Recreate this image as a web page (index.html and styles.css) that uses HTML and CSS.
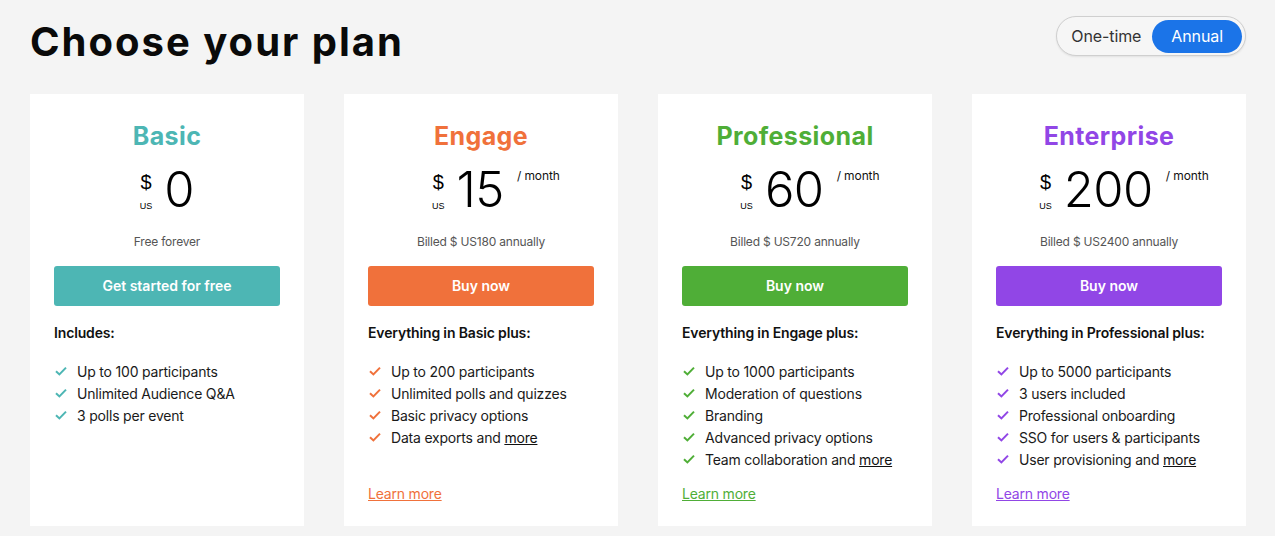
FILE: index.html
```html
<!DOCTYPE html>
<html lang="en">
<head>
<meta charset="utf-8">
<title>Choose your plan</title>
<link rel="stylesheet" href="styles.css">
</head>
<body>
<div class="page">
  <header class="header">
    <h1 class="headline">Choose your plan</h1>
    <div class="toggle">
      <span class="toggle-opt">One-time</span>
      <span class="toggle-opt active">Annual</span>
    </div>
  </header>

  <main class="cards">
    <section class="card basic">
      <h2 class="plan-name">Basic</h2>
      <div class="price">
        <div class="cur"><span class="dollar">$</span><span class="us">US</span></div>
        <span class="amount">0</span>
      </div>
      <p class="billed">Free forever</p>
      <a class="btn" href="#">Get started for free</a>
      <h3 class="inc">Includes:</h3>
      <ul class="features">
        <li><svg class="chk" viewBox="0 0 12 10"><path d="M1 5.2 L4.4 8.4 L11 1.6"/></svg>Up to 100 participants</li>
        <li><svg class="chk" viewBox="0 0 12 10"><path d="M1 5.2 L4.4 8.4 L11 1.6"/></svg>Unlimited Audience Q&amp;A</li>
        <li><svg class="chk" viewBox="0 0 12 10"><path d="M1 5.2 L4.4 8.4 L11 1.6"/></svg>3 polls per event</li>
      </ul>
    </section>

    <section class="card engage">
      <h2 class="plan-name">Engage</h2>
      <div class="price">
        <div class="cur"><span class="dollar">$</span><span class="us">US</span></div>
        <span class="amount">15</span>
        <span class="per">/ month</span>
      </div>
      <p class="billed">Billed $ US180 annually</p>
      <a class="btn" href="#">Buy now</a>
      <h3 class="inc">Everything in Basic plus:</h3>
      <ul class="features">
        <li><svg class="chk" viewBox="0 0 12 10"><path d="M1 5.2 L4.4 8.4 L11 1.6"/></svg>Up to 200 participants</li>
        <li><svg class="chk" viewBox="0 0 12 10"><path d="M1 5.2 L4.4 8.4 L11 1.6"/></svg>Unlimited polls and quizzes</li>
        <li><svg class="chk" viewBox="0 0 12 10"><path d="M1 5.2 L4.4 8.4 L11 1.6"/></svg>Basic privacy options</li>
        <li><svg class="chk" viewBox="0 0 12 10"><path d="M1 5.2 L4.4 8.4 L11 1.6"/></svg>Data exports and&nbsp;<a class="more" href="#">more</a></li>
      </ul>
      <a class="learn" href="#">Learn more</a>
    </section>

    <section class="card pro">
      <h2 class="plan-name">Professional</h2>
      <div class="price">
        <div class="cur"><span class="dollar">$</span><span class="us">US</span></div>
        <span class="amount">60</span>
        <span class="per">/ month</span>
      </div>
      <p class="billed">Billed $ US720 annually</p>
      <a class="btn" href="#">Buy now</a>
      <h3 class="inc">Everything in Engage plus:</h3>
      <ul class="features">
        <li><svg class="chk" viewBox="0 0 12 10"><path d="M1 5.2 L4.4 8.4 L11 1.6"/></svg>Up to 1000 participants</li>
        <li><svg class="chk" viewBox="0 0 12 10"><path d="M1 5.2 L4.4 8.4 L11 1.6"/></svg>Moderation of questions</li>
        <li><svg class="chk" viewBox="0 0 12 10"><path d="M1 5.2 L4.4 8.4 L11 1.6"/></svg>Branding</li>
        <li><svg class="chk" viewBox="0 0 12 10"><path d="M1 5.2 L4.4 8.4 L11 1.6"/></svg>Advanced privacy options</li>
        <li><svg class="chk" viewBox="0 0 12 10"><path d="M1 5.2 L4.4 8.4 L11 1.6"/></svg>Team collaboration and&nbsp;<a class="more" href="#">more</a></li>
      </ul>
      <a class="learn" href="#">Learn more</a>
    </section>

    <section class="card ent">
      <h2 class="plan-name">Enterprise</h2>
      <div class="price">
        <div class="cur"><span class="dollar">$</span><span class="us">US</span></div>
        <span class="amount">200</span>
        <span class="per">/ month</span>
      </div>
      <p class="billed">Billed $ US2400 annually</p>
      <a class="btn" href="#">Buy now</a>
      <h3 class="inc">Everything in Professional plus:</h3>
      <ul class="features">
        <li><svg class="chk" viewBox="0 0 12 10"><path d="M1 5.2 L4.4 8.4 L11 1.6"/></svg>Up to 5000 participants</li>
        <li><svg class="chk" viewBox="0 0 12 10"><path d="M1 5.2 L4.4 8.4 L11 1.6"/></svg>3 users included</li>
        <li><svg class="chk" viewBox="0 0 12 10"><path d="M1 5.2 L4.4 8.4 L11 1.6"/></svg>Professional onboarding</li>
        <li><svg class="chk" viewBox="0 0 12 10"><path d="M1 5.2 L4.4 8.4 L11 1.6"/></svg>SSO for users &amp; participants</li>
        <li><svg class="chk" viewBox="0 0 12 10"><path d="M1 5.2 L4.4 8.4 L11 1.6"/></svg>User provisioning and&nbsp;<a class="more" href="#">more</a></li>
      </ul>
      <a class="learn" href="#">Learn more</a>
    </section>
  </main>
</div>
</body>
</html>
```

FILE: styles.css
```css
* { box-sizing: border-box; }
html, body { margin: 0; padding: 0; }
body {
  background: #f4f4f4;
  font-family: Inter, "Liberation Sans", Arial, sans-serif;
  color: #111;
}
.page { padding: 16px 29px 0 30px; }

.header {
  display: flex;
  justify-content: space-between;
  align-items: flex-start;
  height: 78px;
}
.headline {
  margin: 0;
  font-family: Inter, "Liberation Sans", sans-serif;
  font-weight: 700;
  font-size: 40px;
  line-height: 52px;
  letter-spacing: 2px;
  color: #0a0a0a;
}

.toggle {
  display: flex;
  align-items: center;
  height: 40px;
  padding: 0 3px 0 14px;
  border: 1px solid #cfcfcf;
  border-radius: 20px;
  background: #f6f6f6;
  box-shadow: 0 1px 2px rgba(0,0,0,0.08);
}
.toggle-opt {
  font-size: 16px;
  color: #333;
  line-height: 33px;
  letter-spacing: -0.1px;
}
.toggle-opt.active {
  margin-left: 11px;
  padding: 0 19px;
  height: 33px;
  border-radius: 17px;
  background: #1b74e8;
  color: #fff;
}

.cards {
  display: grid;
  grid-template-columns: repeat(4, 274px);
  column-gap: 40px;
}
.card {
  background: #fff;
  display: flex;
  flex-direction: column;
  padding: 27px 24px 24px;
}
.plan-name {
  margin: 0;
  text-align: center;
  font-family: Inter, sans-serif;
  font-weight: 700;
  font-size: 25px;
  line-height: 30px;
  letter-spacing: 0.4px;
}
.basic { --c: #4db6b4; }
.engage { --c: #f0713b; }
.pro { --c: #4fae37; }
.ent { --c: #9146e6; }
.plan-name { color: var(--c); }

.price {
  margin-top: 14px;
  display: flex;
  justify-content: center;
  align-items: flex-start;
  height: 51px;
  color: #000;
}
.cur {
  display: flex;
  flex-direction: column;
  align-items: center;
  padding-top: 6px;
  font-family: "Liberation Sans", Arial, sans-serif;
}
.dollar { font-size: 20px; line-height: 22px; }
.us { font-size: 9px; line-height: 12px; margin-top: 7px; }
.amount {
  font-family: Inter, sans-serif;
  font-weight: 300;
  font-size: 49px;
  line-height: 50px;
  margin-left: 12px;
  letter-spacing: -0.5px;
}
.per {
  flex: 0 0 13px;
  width: 13px;
  margin-left: 13px;
  white-space: nowrap;
  font-family: Inter, sans-serif;
  font-size: 12px;
  line-height: 14px;
  margin-top: 4px;
  color: #111;
  letter-spacing: -0.1px;
}

.billed {
  margin: 18px 0 0;
  text-align: center;
  font-size: 12px;
  line-height: 16px;
  color: #555;
  letter-spacing: -0.2px;
}
.btn {
  display: block;
  margin-top: 16px;
  height: 40px;
  line-height: 40px;
  border-radius: 3px;
  background: var(--c);
  color: #fff;
  text-align: center;
  font-size: 14px;
  font-weight: 600;
  text-decoration: none;
}
.inc {
  margin: 17px 0 0;
  font-size: 14px;
  line-height: 20px;
  font-weight: 600;
  color: #111;
  letter-spacing: -0.15px;
}
.features {
  list-style: none;
  margin: 17px 0 0;
  padding: 0;
}
.features li {
  display: flex;
  align-items: center;
  height: 22px;
  font-size: 14px;
  color: #1a1a1a;
  letter-spacing: -0.2px;
}
.chk {
  width: 12px;
  height: 10px;
  margin: 0 10px 0 1px;
  flex: 0 0 12px;
}
.chk path {
  fill: none;
  stroke: var(--c);
  stroke-width: 2;
  stroke-linecap: butt;
  stroke-linejoin: miter;
}
.more { color: #111; text-decoration: underline; }
.learn {
  margin-top: auto;
  padding-top: 16px;
  font-size: 14px;
  line-height: 16px;
  color: var(--c);
  text-decoration: underline;
  letter-spacing: -0.2px;
}
```
